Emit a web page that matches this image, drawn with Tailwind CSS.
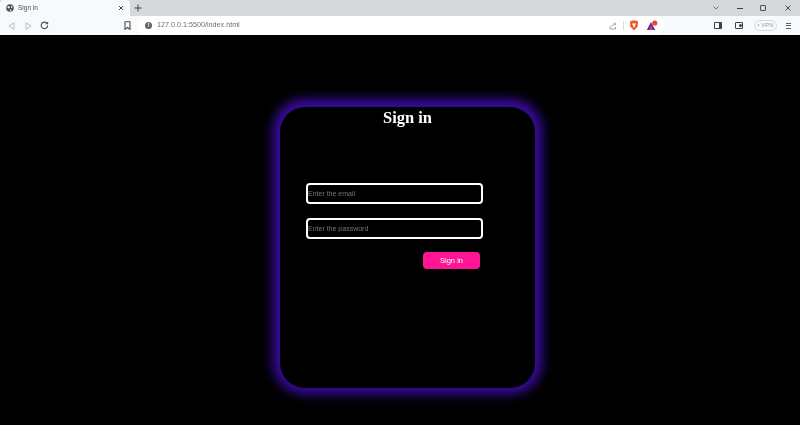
<!DOCTYPE html>
<html lang="en">
<head>
    <meta charset="UTF-8">
    <script src="https://cdn.jsdelivr.net/npm/@tailwindcss/browser@4"></script>
    <title>Sign in</title>
</head>
<body class="w-[800px] h-[425px] overflow-hidden bg-black flex flex-col antialiased font-['Liberation_Sans',sans-serif]">
    <!-- tab strip -->
    <div class="h-[16px] bg-[#d5d9dc] flex items-stretch shrink-0">
        <div class="w-[130px] bg-[#f8f9fa] rounded-t-[4px] flex items-center pl-[6px] pr-[6px]">
            <svg class="w-[8px] h-[8px] text-[#4a4f54]" viewBox="0 0 16 16"><circle cx="8" cy="8" r="7.5" fill="currentColor"/><path d="M3 4l4 1 1 3-3 1-2-2zM10 3l3 2-1 3-2-1zM8 11l3 0-1 3-2 0z" fill="#f8f9fa"/></svg>
            <span class="ml-[4px] text-[6.5px] text-[#4a4f54] will-change-transform">Sign in</span>
            <svg class="ml-auto w-[6px] h-[6px]" viewBox="0 0 6 6"><path d="M1 1l4 4M5 1l-4 4" stroke="#3c4043" stroke-width="1"/></svg>
        </div>
        <svg class="ml-[4px] mt-[4px] w-[8px] h-[8px]" viewBox="0 0 8 8"><path d="M4 .5v7M.5 4h7" stroke="#3c4043" stroke-width="1"/></svg>
        <div class="ml-auto flex items-center">
            <svg class="w-[6px] h-[4px] mr-[18px]" viewBox="0 0 6 4"><path d="M.5 .5L3 3 5.5 .5" stroke="#70757a" fill="none"/></svg>
            <div class="w-[6px] h-px bg-[#3c4043] mr-[17px]"></div>
            <div class="w-[6px] h-[6px] border border-[#4a4f54] rounded-[1px] mr-[19px]"></div>
            <svg class="w-[6px] h-[6px] mr-[9px]" viewBox="0 0 6 6"><path d="M.5 .5l5 5M5.5 .5l-5 5" stroke="#3c4043" stroke-width="0.9"/></svg>
        </div>
    </div>
    <!-- toolbar -->
    <div class="h-[19px] bg-[#f8f9fa] flex items-center shrink-0">
        <svg class="ml-[8px] w-[7px] h-[8px]" viewBox="0 0 7 8"><path d="M6 .8L1 4l5 3.2z" stroke="#b9bdc1" fill="none"/></svg>
        <svg class="ml-[10px] w-[7px] h-[8px]" viewBox="0 0 7 8"><path d="M1 .8L6 4 1 7.2z" stroke="#b9bdc1" fill="none"/></svg>
        <svg class="ml-[8px] w-[9px] h-[9px]" viewBox="0 0 10 10"><path d="M8.5 5A3.6 3.6 0 1 1 7.4 2.3" stroke="#4a4f54" stroke-width="1.3" fill="none"/><path d="M9 .5v3.2H5.8z" fill="#4a4f54"/></svg>
        <svg class="ml-[75px] w-[7px] h-[9px]" viewBox="0 0 7 9"><path d="M1 .7h5v7.6L3.5 6.5 1 8.3z" stroke="#4a4f54" stroke-width="1.1" fill="none"/></svg>
        <div class="ml-[6px] w-[527px] h-[19px] bg-white flex items-center rounded-[9px]">
            <div class="ml-[8px] w-[7px] h-[7px] rounded-full bg-[#5f6368] text-white text-[6px] leading-[7px] text-center font-bold">!</div>
            <span class="ml-[5px] text-[7.2px] text-[#6a6f74] will-change-transform">127.0.0.1:5500/index.html</span>
            <svg class="ml-auto w-[8px] h-[8px]" viewBox="0 0 8 8"><path d="M1 4v3h5.5V5M3 4.5C3 3 4 2 5.5 2M5 .5L7 2 5 3.5" stroke="#7a7f84" stroke-width="0.7" fill="none"/></svg>
            <div class="ml-[6px] w-px h-[9px] bg-[#dadce0]"></div>
            <svg class="ml-[5px] w-[10px] h-[11px]" viewBox="0 0 10 11"><path d="M1 1.5L3 .5h4l2 1-.3 5L5 10.5 1.3 6.5z" fill="#f0592b"/><path d="M3 3.5h4L5 8z" fill="#fff"/></svg>
            <svg class="ml-[7px] mr-[6px] w-[12px] h-[11px]" viewBox="0 0 12 11"><path d="M5 2L.8 10h8.4z" fill="#5a2a8c"/><path d="M5 5L3.4 10h3.2z" fill="#e0457b"/><circle cx="8.8" cy="3" r="2.6" fill="#e8442f"/></svg>
        </div>
        <div class="ml-[50px] w-[8px] h-[7px] border border-[#3c4043] border-r-[3px] rounded-[1px]"></div>
        <div class="ml-[13px] w-[8px] h-[7px] border border-[#3c4043] rounded-[1px] flex items-center justify-end"><div class="w-[3px] h-[3px] rounded-full bg-[#3c4043]"></div></div>
        <div class="ml-[11px] w-[23px] h-[11px] border border-[#d5d8db] rounded-full text-[6px] leading-[9px] text-[#9a9ea2] text-center will-change-transform">• VPN</div>
        <div class="ml-[9px] w-[5px] flex flex-col gap-[1.5px]">
            <div class="h-px bg-[#5f6368]"></div>
            <div class="h-px bg-[#5f6368]"></div>
            <div class="h-px bg-[#5f6368]"></div>
        </div>
    </div>
    <!-- page -->
    <main class="flex-1 bg-black pt-[72px] pl-[280px]">
        <div class="w-[255px] h-[281px] bg-black rounded-[25px] shadow-[0_-1px_12px_7px_#3a0ca3] flex flex-col">
            <h1 class="text-center text-white text-[16.5px] leading-[21px] font-bold font-['Liberation_Serif',serif] will-change-transform">Sign in</h1>
            <form class="mt-[55px] pl-[26px] will-change-transform">
                <input class="block w-[177px] h-[21px] border-[2px] border-white rounded-[4px] px-0 text-[7px] text-white placeholder:text-[#757575]" placeholder="Enter the email">
                <input class="block mt-[14px] w-[177px] h-[21px] border-[2px] border-white rounded-[4px] px-0 text-[7px] text-white placeholder:text-[#757575]" placeholder="Enter the password">
                <button type="button" class="block mt-[13px] ml-[117px] w-[57px] h-[17px] bg-[#ff1493] rounded-[4px] text-white text-[7.5px]">Sign in</button>
            </form>
        </div>
    </main>
</body>
</html>
